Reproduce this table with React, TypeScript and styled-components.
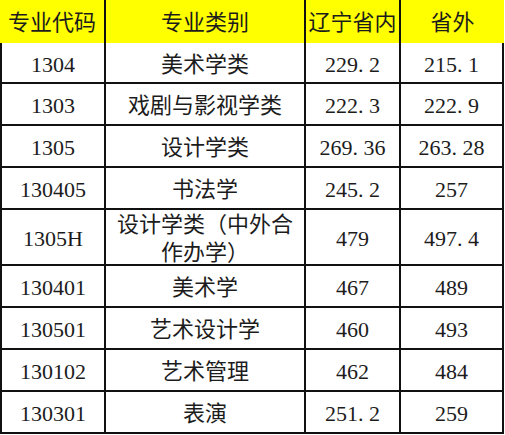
import { Fragment } from "react";
import styled, { createGlobalStyle } from "styled-components";

const GlobalStyle = createGlobalStyle`
  html, body {
    margin: 0;
    padding: 0;
    background: #ffffff;
  }
`;

type Row = {
  code: string;
  name: string;
  inside: string;
  outside: string;
};

const rows: Row[] = [
  { code: "1304", name: "美术学类", inside: "229.2", outside: "215.1" },
  { code: "1303", name: "戏剧与影视学类", inside: "222.3", outside: "222.9" },
  { code: "1305", name: "设计学类", inside: "269.36", outside: "263.28" },
  { code: "130405", name: "书法学", inside: "245.2", outside: "257" },
  { code: "1305H", name: "设计学类（中外合作办学）", inside: "479", outside: "497.4" },
  { code: "130401", name: "美术学", inside: "467", outside: "489" },
  { code: "130501", name: "艺术设计学", inside: "460", outside: "493" },
  { code: "130102", name: "艺术管理", inside: "462", outside: "484" },
  { code: "130301", name: "表演", inside: "251.2", outside: "259" },
];

const Table = styled.div`
  display: grid;
  grid-template-columns: 104px 200px 95px 105px;
  grid-template-rows: 43px 41px repeat(3, 42px) 56px repeat(4, 42px);
  width: 504px;
  font-family: "Liberation Serif", "Noto Sans CJK SC", serif;
  font-size: 22px;
  line-height: 28px;
  color: #1c1c1c;
`;

const HeadCell = styled.div<{ $first?: boolean }>`
  box-sizing: border-box;
  display: flex;
  align-items: center;
  justify-content: center;
  padding-top: 2px;
  background: #ffff00;
  border-left: ${(p) => (p.$first ? "none" : "2px solid #111")};
  white-space: nowrap;
`;

const Cell = styled.div<{ $last?: boolean }>`
  box-sizing: border-box;
  display: flex;
  align-items: center;
  justify-content: center;
  padding: 4px 8px 0;
  text-align: center;
  border-left: 2px solid #111;
  border-bottom: 2px solid #111;
  border-right: ${(p) => (p.$last ? "2px solid #111" : "none")};
`;

// the source font gives the decimal point a half-em cell
const Dot = styled.span`
  display: inline-block;
  width: 0.5em;
  text-align: left;
`;

function Num({ value }: { value: string }) {
  const [whole, frac] = value.split(".");
  return (
    <span>
      {whole}
      {frac !== undefined && (
        <>
          <Dot>.</Dot>
          {frac}
        </>
      )}
    </span>
  );
}

export default function App() {
  return (
    <>
      <GlobalStyle />
      <Table>
        <HeadCell $first>专业代码</HeadCell>
        <HeadCell>专业类别</HeadCell>
        <HeadCell>辽宁省内</HeadCell>
        <HeadCell>省外</HeadCell>
        {rows.map((r) => (
          <Fragment key={r.code}>
            <Cell>{r.code}</Cell>
            <Cell>{r.name}</Cell>
            <Cell>
              <Num value={r.inside} />
            </Cell>
            <Cell $last>
              <Num value={r.outside} />
            </Cell>
          </Fragment>
        ))}
      </Table>
    </>
  );
}
